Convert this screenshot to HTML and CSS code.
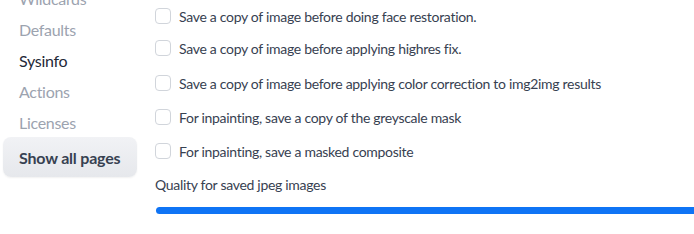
FILE: index.html
```html
<!DOCTYPE html>
<html lang="en">
<head>
  <meta charset="UTF-8" />
  <title>Settings</title>
  <link rel="stylesheet" href="styles.css">
</head>
<body>
  <div class="page">
    <!-- left nav -->
    <div class="sidebar">
      <div class="nav-item">Wildcards</div>
      <div class="nav-item">Defaults</div>
      <div class="nav-item active">Sysinfo</div>
      <div class="nav-item">Actions</div>
      <div class="nav-item">Licenses</div>
      <button class="show-all">Show all pages</button>
    </div>

    <!-- settings list -->
    <div class="settings">
      <label class="check first"><span class="box"></span>Save a copy of image before doing face restoration.</label>
      <label class="check"><span class="box"></span>Save a copy of image before applying highres fix.</label>
      <label class="check"><span class="box"></span>Save a copy of image before applying color correction to img2img results</label>
      <label class="check"><span class="box"></span>For inpainting, save a copy of the greyscale mask</label>
      <label class="check"><span class="box"></span>For inpainting, save a masked composite</label>
      <div class="slider-label">Quality for saved jpeg images</div>
      <div class="slider"></div>
    </div>
  </div>
</body>
</html>
```

FILE: styles.css
```css
body {
  margin: 0;
  font-family: Lato, "Noto Sans", sans-serif;
  background: #fff;
  overflow: hidden;
}

.page {
  display: flex;
  height: 234px;
}

/* Sidebar */
.sidebar {
  width: 137px;
  padding-left: 3px;
  margin-top: -17px;
  display: flex;
  flex-direction: column;
}

.nav-item {
  font-size: 16px;
  letter-spacing: -0.3px;
  color: #9ca3af;
  height: 31px;
  line-height: 31px;
  padding-left: 16px;
}

.nav-item.active {
  color: #1f2937;
}

.show-all {
  margin-top: -1px;
  width: 134px;
  height: 40px;
  text-align: left;
  padding: 0 0 0 16px;
  border: none;
  border-radius: 8px;
  background: linear-gradient(to bottom, #f1f2f5, #e6e8ec);
  box-shadow: 0 1px 2px rgba(0, 0, 0, 0.06);
  font-family: Lato, "Noto Sans", sans-serif;
  font-size: 16px;
  letter-spacing: -0.2px;
  font-weight: bold;
  color: #374151;
}

/* Settings column */
.settings {
  flex: 1;
  padding-left: 15px;
  display: flex;
  flex-direction: column;
}

.check {
  display: flex;
  align-items: center;
  height: 16px;
  margin-top: 19px;
  font-size: 14px;
  letter-spacing: -0.3px;
  color: #374151;
}

.check.first {
  margin-top: 8px;
}

.check:nth-child(2) {
  margin-top: 16px;
}

.check:nth-child(4),
.check:nth-child(5) {
  margin-top: 18px;
}

.box {
  width: 14px;
  height: 14px;
  border: 1px solid #d1d5db;
  border-radius: 4px;
  background: #fff;
  margin-right: 8px;
  flex-shrink: 0;
}

.slider-label {
  margin-top: 17px;
  font-size: 14px;
  letter-spacing: -0.3px;
  color: #374151;
}

.slider {
  margin-top: 14px;
  margin-left: 1px;
  height: 7px;
  background: #0f74f5;
  border-radius: 4px 0 0 4px;
}
```
